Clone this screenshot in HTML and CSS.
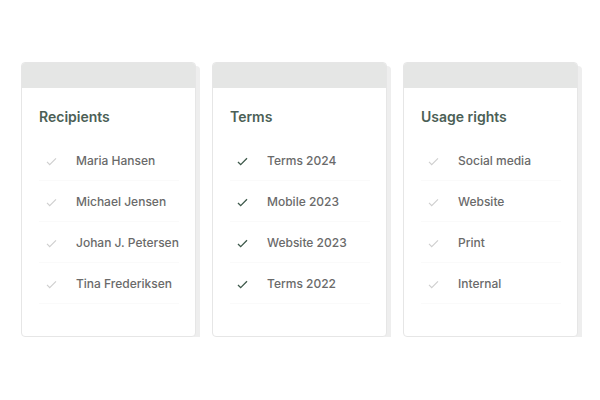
FILE: index.html
```html
<!DOCTYPE html>
<html lang="en">

<head>
	<meta charset="UTF-8">
	<meta name="viewport" content="width=device-width, initial-scale=1.0">
	<title>Permissions</title>
	<link rel="stylesheet" href="styles.css">
</head>

<body>
	<div class="cards">
		<div class="card">
			<div class="cardHeader"></div>
			<div class="cardBody">
				<h2>Recipients</h2>
				<ul class="list">
					<li><span class="check"><svg viewBox="0 0 12 10"><path d="M1 5.5l3 3L11 1.5"/></svg></span>Maria Hansen</li>
					<li><span class="check"><svg viewBox="0 0 12 10"><path d="M1 5.5l3 3L11 1.5"/></svg></span>Michael Jensen</li>
					<li><span class="check"><svg viewBox="0 0 12 10"><path d="M1 5.5l3 3L11 1.5"/></svg></span>Johan J. Petersen</li>
					<li><span class="check"><svg viewBox="0 0 12 10"><path d="M1 5.5l3 3L11 1.5"/></svg></span>Tina Frederiksen</li>
				</ul>
			</div>
		</div>
		<div class="card active">
			<div class="cardHeader"></div>
			<div class="cardBody">
				<h2>Terms</h2>
				<ul class="list">
					<li><span class="check"><svg viewBox="0 0 12 10"><path d="M1 5.5l3 3L11 1.5"/></svg></span>Terms 2024</li>
					<li><span class="check"><svg viewBox="0 0 12 10"><path d="M1 5.5l3 3L11 1.5"/></svg></span>Mobile 2023</li>
					<li><span class="check"><svg viewBox="0 0 12 10"><path d="M1 5.5l3 3L11 1.5"/></svg></span>Website 2023</li>
					<li><span class="check"><svg viewBox="0 0 12 10"><path d="M1 5.5l3 3L11 1.5"/></svg></span>Terms 2022</li>
				</ul>
			</div>
		</div>
		<div class="card">
			<div class="cardHeader"></div>
			<div class="cardBody">
				<h2>Usage rights</h2>
				<ul class="list">
					<li><span class="check"><svg viewBox="0 0 12 10"><path d="M1 5.5l3 3L11 1.5"/></svg></span>Social media</li>
					<li><span class="check"><svg viewBox="0 0 12 10"><path d="M1 5.5l3 3L11 1.5"/></svg></span>Website</li>
					<li><span class="check"><svg viewBox="0 0 12 10"><path d="M1 5.5l3 3L11 1.5"/></svg></span>Print</li>
					<li><span class="check"><svg viewBox="0 0 12 10"><path d="M1 5.5l3 3L11 1.5"/></svg></span>Internal</li>
				</ul>
			</div>
		</div>
	</div>
</body>

</html>
```

FILE: styles.css
```css
body,
html {
	margin: 0;
	padding: 0;
	background-color: #fff;
	font-family: "Inter", "Liberation Sans", sans-serif;
}

.cards {
	display: flex;
	gap: 16px;
	padding: 62px 0 0 21px;
}

.card {
	width: 175px;
	height: 275px;
	box-sizing: border-box;
	display: flex;
	flex-direction: column;
	background-color: #fff;
	border: 1px solid #e6e6e6;
	border-radius: 4px;
	box-shadow: 4px 4px 0 #eeeeee;
	overflow: hidden;
}

.cardHeader {
	height: 25px;
	flex: 0 0 auto;
	background-color: #e5e6e5;
}

.cardBody {
	padding: 19px 0 0 17px;
}

h2 {
	margin: 0;
	font-size: 14px;
	font-weight: 600;
	color: #4c5f56;
	line-height: 20px;
}

.list {
	list-style: none;
	margin: 13px 0 0 0;
	padding: 0;
}

.list li {
	display: flex;
	align-items: center;
	height: 41px;
	font-size: 12px;
	font-weight: 500;
	color: #6a6a6a;
	border-bottom: 1px solid #fafafa;
	box-sizing: border-box;
	margin-right: 16px;
}

.check {
	width: 11px;
	height: 9px;
	margin: 2px 19px 0 7px;
	display: flex;
}

.check svg {
	width: 100%;
	height: 100%;
	fill: none;
	stroke: #cfcfcf;
	stroke-width: 1.3;
}

.active .check svg {
	stroke: #3f5a4c;
	stroke-width: 1.5;
}
```
